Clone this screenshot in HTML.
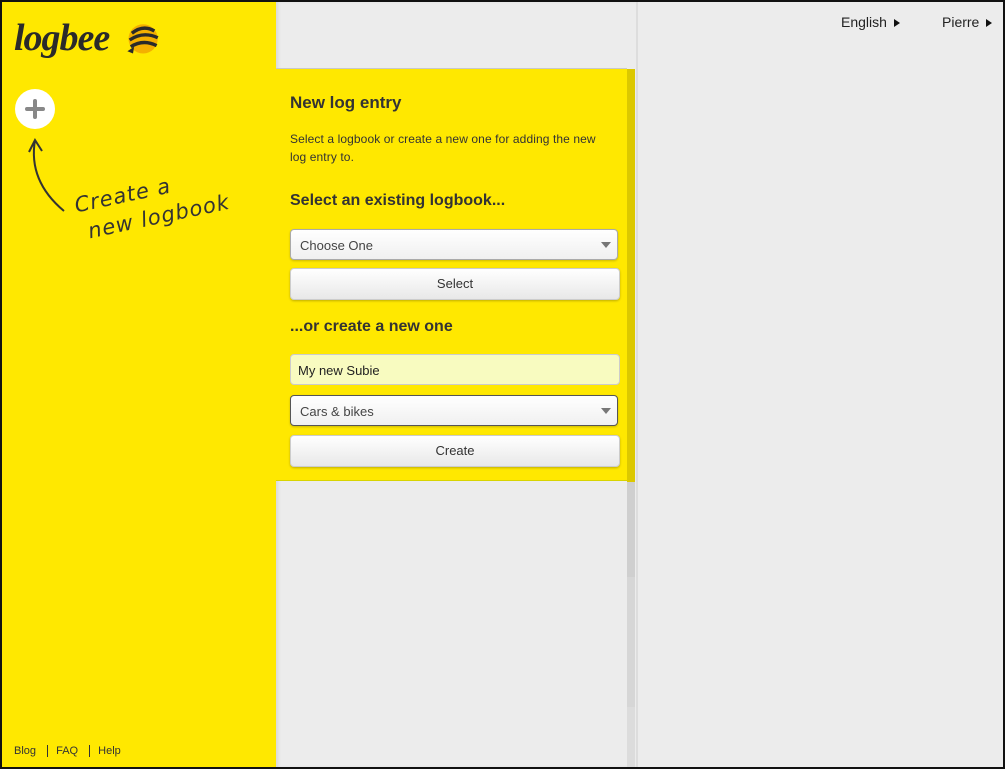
<!DOCTYPE html>
<html><head><meta charset="utf-8"><style>
*{box-sizing:border-box;margin:0;padding:0}
body{width:1005px;height:769px;background:#111;position:relative;overflow:hidden;font-family:"Liberation Sans",sans-serif;color:#333}
.abs{position:absolute}
#side{left:2px;top:2px;width:274px;height:765px;background:#ffe800}
#mid{left:276px;top:2px;width:360px;height:765px;background:#ececec;box-shadow:inset 3px 0 3px -1px #d8d8d8}
#right{left:636px;top:2px;width:367px;height:765px;background:#ececec;border-left:2px solid #ddd}
#panel{left:276px;top:68px;width:351px;height:413px;background:#ffe800;border-top:1px solid #c8c8c8;border-bottom:1px solid #d8d400}
.bar{left:627px;width:8px}
.h{font-weight:bold;font-size:16px;color:#333}
.sel,.btn,.inp{position:absolute;left:290px;border-radius:4px;font-size:13px}
.sel{width:328px;height:31px;border:1px solid #aaa;background:linear-gradient(#fff,#f0f0f0);padding:8px 9px;color:#444;box-shadow:0 1px 2px rgba(0,0,0,.2)}
.sel:after{content:"";position:absolute;right:6px;top:12px;border:5px solid transparent;border-top:6px solid #777;border-bottom:0}
.btn{width:330px;height:32px;border:1px solid #ccc;background:linear-gradient(#fff,#e8e8e8);text-align:center;line-height:30px;color:#333;box-shadow:0 1px 2px rgba(0,0,0,.25)}
.inp{width:330px;height:31px;border:1px solid #ccc;background:#f8fbc0;padding:8px 7px;color:#222}
.nav{font-size:14px;color:#222;top:14px}
.tri{display:inline-block;border:4px solid transparent;border-left:6px solid #111;border-right:0;margin-left:7px;vertical-align:0}
</style></head><body>
<div id="side" class="abs"></div>
<div id="mid" class="abs"></div>
<div id="right" class="abs"></div>
<div class="abs bar" style="top:69px;height:413px;background:#dcc800"></div>
<div class="abs bar" style="top:482px;height:95px;background:#cfcfcf"></div>
<div class="abs bar" style="top:577px;height:130px;background:#d6d6d6"></div>
<div class="abs bar" style="top:707px;height:60px;background:#dcdcdc"></div>
<div id="panel" class="abs"></div>

<div class="abs" style="left:14px;top:16px;font:italic bold 38px 'Liberation Serif',serif;color:#2a2a2a;letter-spacing:-1px">logbee</div>
<svg class="abs" style="left:122px;top:22px" width="40" height="36" viewBox="0 0 34 32">
<circle cx="18" cy="15" r="13" fill="#f4b000"/>
<path d="M8 10 Q18 2 28 8 M6 16 Q18 8 31 14 M7 22 Q18 15 30 21" stroke="#2a2a2a" stroke-width="3" fill="none"/>
<path d="M4 26 L10 22 L9 28Z" fill="#2a2a2a"/></svg>

<div class="abs" style="left:15px;top:89px;width:40px;height:40px;border-radius:50%;background:#fff"></div>
<div class="abs" style="left:25px;top:107px;width:20px;height:4px;background:#888;border-radius:2px"></div>
<div class="abs" style="left:33px;top:99px;width:4px;height:20px;background:#888;border-radius:2px"></div>
<svg class="abs" style="left:26px;top:136px" width="50" height="80"><path d="M9 4 Q2 45 38 75 M3 16 L9 4 L16 15" stroke="#333" stroke-width="2" fill="none"/></svg>
<div class="abs" style="left:72px;top:192px;font:21px 'DejaVu Sans',sans-serif;font-style:italic;color:#333;transform:rotate(-12deg);transform-origin:left top;line-height:28px;letter-spacing:1px">Create a<br>&nbsp;new logbook</div>

<div class="abs" style="left:14px;top:745px;font-size:11px;color:#333">Blog <span style="margin:0 8px;border-left:1px solid #333"></span> FAQ <span style="margin:0 8px;border-left:1px solid #333"></span> Help</div>

<div class="abs nav" style="left:841px">English<span class="tri"></span></div>
<div class="abs nav" style="left:942px">Pierre<span class="tri"></span></div>

<div class="abs h" style="left:290px;top:93px;font-size:17px">New log entry</div>
<div class="abs" style="left:290px;top:130px;font-size:12px;line-height:18px;width:325px;letter-spacing:.1px">Select a logbook or create a new one for adding the new log entry to.</div>
<div class="abs h" style="left:290px;top:192px">Select an existing logbook...</div>
<div class="sel" style="top:229px">Choose One</div>
<div class="btn" style="top:268px">Select</div>
<div class="abs h" style="left:290px;top:318px">...or create a new one</div>
<div class="inp" style="top:354px">My new Subie</div>
<div class="sel" style="top:395px;border-color:#555">Cars &amp; bikes</div>
<div class="btn" style="top:435px">Create</div>
</body></html>
